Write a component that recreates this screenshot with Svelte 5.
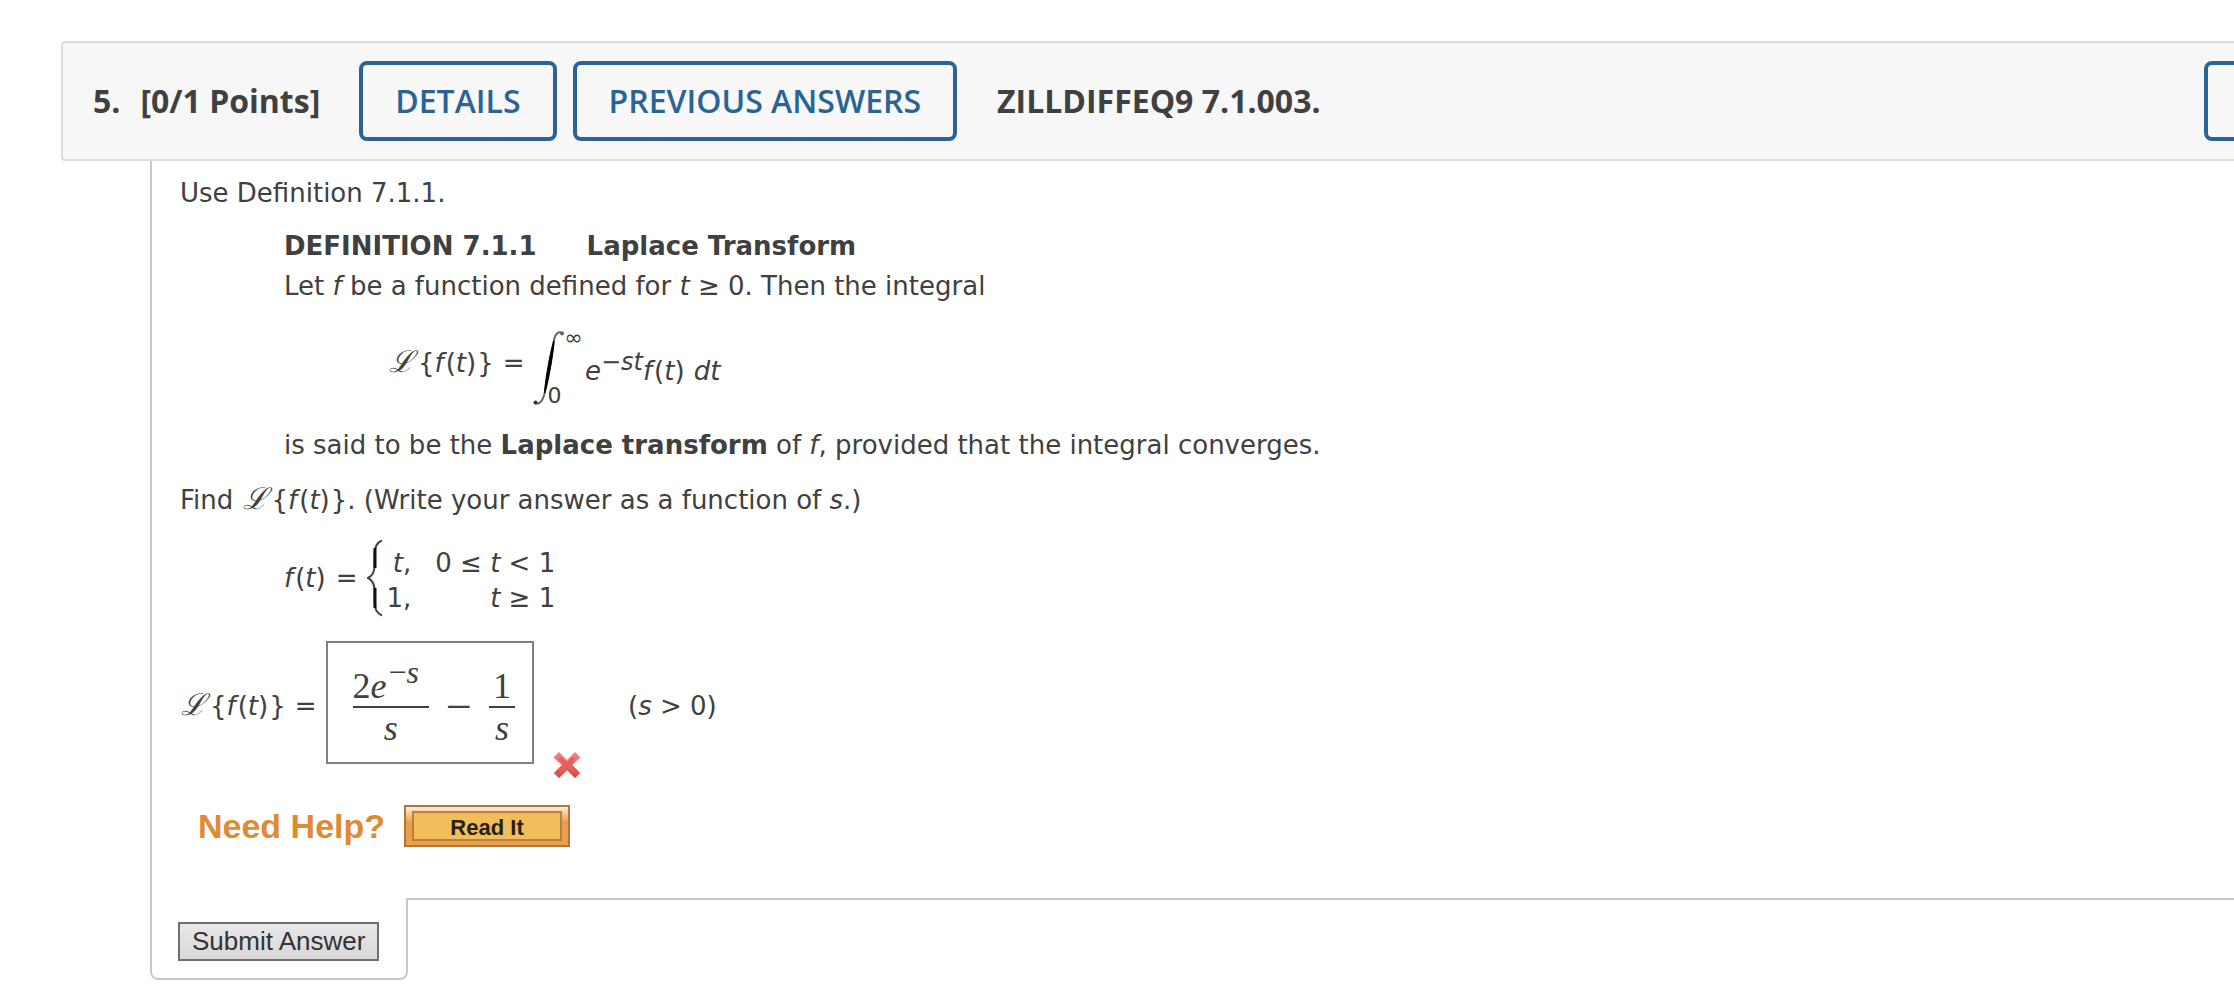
<script>
	const number = "5.";
	const points = "[0/1 Points]";
	const source = "ZILLDIFFEQ9 7.1.003.";
</script>

{#snippet ft()}
	<i>f</i><span class="arg">(<i>t</i>)</span>
{/snippet}

{#snippet laplace()}
	<span class="laplace"><i class="script">ℒ</i>&#123;{@render ft()}&#125;</span>
{/snippet}

<main>
	<header>
		<h2><span>{number}</span> <span>{points}</span></h2>
		<button>DETAILS</button>
		<button>PREVIOUS ANSWERS</button>
		<strong>{source}</strong>
		<button class="notes" aria-label="Notes"></button>
	</header>

	<section class="question">
		<p>Use Definition 7.1.1.</p>
		<div class="definition">
			<p><b>DEFINITION 7.1.1</b><b class="name">Laplace Transform</b></p>
			<p>Let <i>f</i> be a function defined for <i>t</i> ≥ 0. Then the integral</p>
			<div class="integral">
				<span class="lhs">{@render laplace()}<span class="eq">=</span></span>
				<svg width="32" height="76" viewBox="0 0 32 76" aria-hidden="true">
					<path
						d="M30 4C30 1.500 23 0 21 10C18 28 16 45 12 62C9.500 72 6 75 2 73"
						fill="none"
						stroke="#666"
						stroke-width="2"
					/>
					<path d="M21 11C18.500 15 12 50 11.500 63C14.500 56 20.500 24 21 11Z" fill="#000" stroke="#000" />
					<circle cx="29" cy="3.500" r="2" fill="#666" />
					<circle cx="2.500" cy="72.500" r="2" fill="#333" />
				</svg>
				<span class="limits"><span class="upper">∞</span><span>0</span></span>
				<span class="integrand"><i>e</i><sup>−<i>st</i></sup>{@render ft()} <i>dt</i></span>
			</div>
			<p>
				is said to be the <b>Laplace transform</b> of <i>f</i>, provided that the integral converges.
			</p>
		</div>
		<p class="find">Find {@render laplace()}. (Write your answer as a function of <i>s</i>.)</p>
		<div class="piecewise">
			<span class="lhs">{@render ft()}<span class="eq">=</span></span>
			<svg width="16" height="78" viewBox="0 0 16 78" aria-hidden="true">
				<path
					d="M15 1.500C9 4 7.500 9 7.500 15V27C7.500 34 5 37 1 39C5 41 7.500 44 7.500 51V63C7.500 69 9 74 15 76.500"
					fill="none"
					stroke="#444"
					stroke-width="2"
				/>
				<path d="M8 9V29M8 49V69" stroke="#111" stroke-width="3" />
			</svg>
			<table>
				<tbody>
					<tr><td><i>t</i>,</td><td>0 ≤ <i>t</i> &lt; 1</td></tr>
					<tr><td>1,</td><td><i>t</i> ≥ 1</td></tr>
				</tbody>
			</table>
		</div>
		<div class="answer">
			<span class="text">{@render laplace()}<span class="eq">=</span></span>
			<div class="box">
				<span class="frac">
					<span class="num wide">2<i>e</i><sup>−<i>s</i></sup></span>
					<i>s</i>
				</span>
				<span class="minus">−</span>
				<span class="frac">
					<span class="num">1</span>
					<i>s</i>
				</span>
			</div>
			<svg class="wrong" width="28" height="28" viewBox="0 0 28 28" role="img" aria-label="Incorrect">
				<defs>
					<linearGradient id="red" x1="0" y1="0" x2="0" y2="1">
						<stop offset="0" stop-color="#f08484" />
						<stop offset="1" stop-color="#e04440" />
					</linearGradient>
				</defs>
				<path
					d="M6 1.500L14 9.500L22 1.500L27 6.500L19 14L27 22L22 27L14 19L6 27L1 22L9 14L1 6.500Z"
					fill="url(#red)"
					stroke="#ea8480"
					stroke-linejoin="round"
				/>
				<path d="M8 8L20 20M20 8L8 20" stroke="#ea5a58" stroke-width="3" stroke-linecap="round" />
			</svg>
			<span class="text">(<i>s</i> &gt; 0)</span>
		</div>
		<div class="help">
			<strong>Need Help?</strong>
			<button><span>Read It</span></button>
		</div>
	</section>

	<footer>
		<div class="tab"><button>Submit Answer</button></div>
		<div class="rule"></div>
	</footer>
</main>

<style>
	:global(body) {
		margin: 0;
		background: #fff;
	}

	main {
		padding: 41px 0 20px 61px;
		color: #404040;
		font-family: Verdana, "DejaVu Sans", sans-serif;
		font-size: 26px;
		line-height: 40px;
		overflow: hidden;
	}

	p {
		margin: 0;
	}

	button {
		flex: none;
		box-sizing: border-box;
		margin: 0;
		cursor: pointer;
	}

	/* the bar runs on past the right edge of the window */
	header {
		display: flex;
		align-items: center;
		gap: 16px;
		margin-right: -180px;
		padding: 18px 20px 18px 30px;
		border: 2px solid #dcdcdc;
		border-radius: 4px;
		background: #f7f7f7;
		font-family: "Open Sans", sans-serif;
		font-size: 32px;
	}

	header h2 {
		display: flex;
		gap: 20px;
		margin: 0 23px 0 0;
		font-size: 32px;
	}

	header button {
		height: 80px;
		padding: 0 32px 2px;
		border: 4px solid #2a6496;
		border-radius: 8px;
		background: #f8f8f8;
		color: #2a6496;
		font: 600 32px "Open Sans", sans-serif;
	}

	header strong {
		margin-left: 24px;
	}

	header .notes {
		width: 188px;
		margin-left: auto;
	}

	.question {
		margin-left: 89px;
		padding: 12px 0 51px 28px;
		border-left: 2px solid #c8c8c8;
	}

	.laplace {
		margin-left: 1px;
		white-space: nowrap;
	}

	.script {
		margin-right: 4px;
		font-family: "Liberation Serif", serif;
		font-size: 30px;
		line-height: 1;
	}

	.arg {
		margin: 0 1px 0 2px;
	}

	.eq {
		margin-left: 9px;
	}

	.definition {
		margin: 13px 0 0 104px;
	}

	.name {
		margin-left: 50px;
	}

	.integral {
		display: flex;
		align-items: center;
		margin: 24px 0 19px 104px;
	}

	.integral .lhs {
		padding-bottom: 10px;
	}

	.integral svg {
		margin-left: 8px;
	}

	.limits {
		display: flex;
		flex-direction: column;
		justify-content: space-between;
		height: 76px;
		margin-left: -17px;
		font-size: 22px;
		line-height: 20px;
	}

	.upper {
		padding-left: 17px;
		line-height: 16px;
	}

	.integrand {
		margin-left: 2px;
		padding-top: 6px;
	}

	sup {
		font-size: 24px;
		line-height: 0;
	}

	.find {
		margin-top: 15px;
	}

	.piecewise {
		display: flex;
		align-items: center;
		gap: 10px;
		margin: 19px 0 24px 104px;
	}

	table {
		margin: 6px 0 0 -7px;
		border-collapse: collapse;
		line-height: 35px;
	}

	td {
		padding: 0;
		text-align: right;
	}

	td + td {
		padding-left: 24px;
	}

	.answer {
		display: flex;
		align-items: center;
	}

	.text {
		padding-top: 6px;
	}

	.box {
		display: flex;
		align-items: center;
		gap: 17px;
		margin-left: 9px;
		padding: 23px 17px 14px 25px;
		border: 2px solid #808080;
		font-family: "Liberation Serif", serif;
		font-size: 36px;
	}

	.frac {
		display: flex;
		flex-direction: column;
		align-items: center;
	}

	.num {
		padding: 0 4px;
		border-bottom: 2px solid #404040;
	}

	.wide {
		padding: 0 10px 0 0;
	}

	.num sup {
		margin-left: 2px;
		font-size: 32px;
		vertical-align: 15px;
	}

	.minus {
		font-size: 46px;
	}

	.wrong {
		align-self: flex-end;
		margin: 0 47px -15px 19px;
	}

	.help {
		display: flex;
		align-items: center;
		gap: 19px;
		margin: 41px 0 0 18px;
	}

	.help strong {
		color: #e08a34;
		font: 700 34px "Liberation Sans", Arial, sans-serif;
	}

	.help button {
		display: flex;
		width: 166px;
		height: 42px;
		padding: 4px 6px;
		border: 2px solid #b07838;
		background: linear-gradient(#fdeedd, #eb9e4c 40%);
		color: #2a2010;
		font: 700 22px "Liberation Sans", Arial, sans-serif;
	}

	.help button span {
		flex: 1;
		border: 2px solid #b8813c;
		background: #f2be5c;
		line-height: 30px;
	}

	footer {
		display: flex;
		margin-left: 89px;
	}

	.tab {
		padding: 24px 27px 17px 26px;
		border: 2px solid #c8c8c8;
		border-top: 0;
		border-radius: 0 0 8px 8px;
		line-height: 0;
	}

	.tab button {
		height: 39px;
		padding: 0 12px;
		border: 2px solid #6f6f6f;
		background: linear-gradient(#e8e8e8, #d8d8d8);
		color: #333;
		font: 26px "Liberation Sans", Arial, sans-serif;
	}

	.rule {
		flex: 1;
		border-top: 2px solid #c8c8c8;
	}
</style>
